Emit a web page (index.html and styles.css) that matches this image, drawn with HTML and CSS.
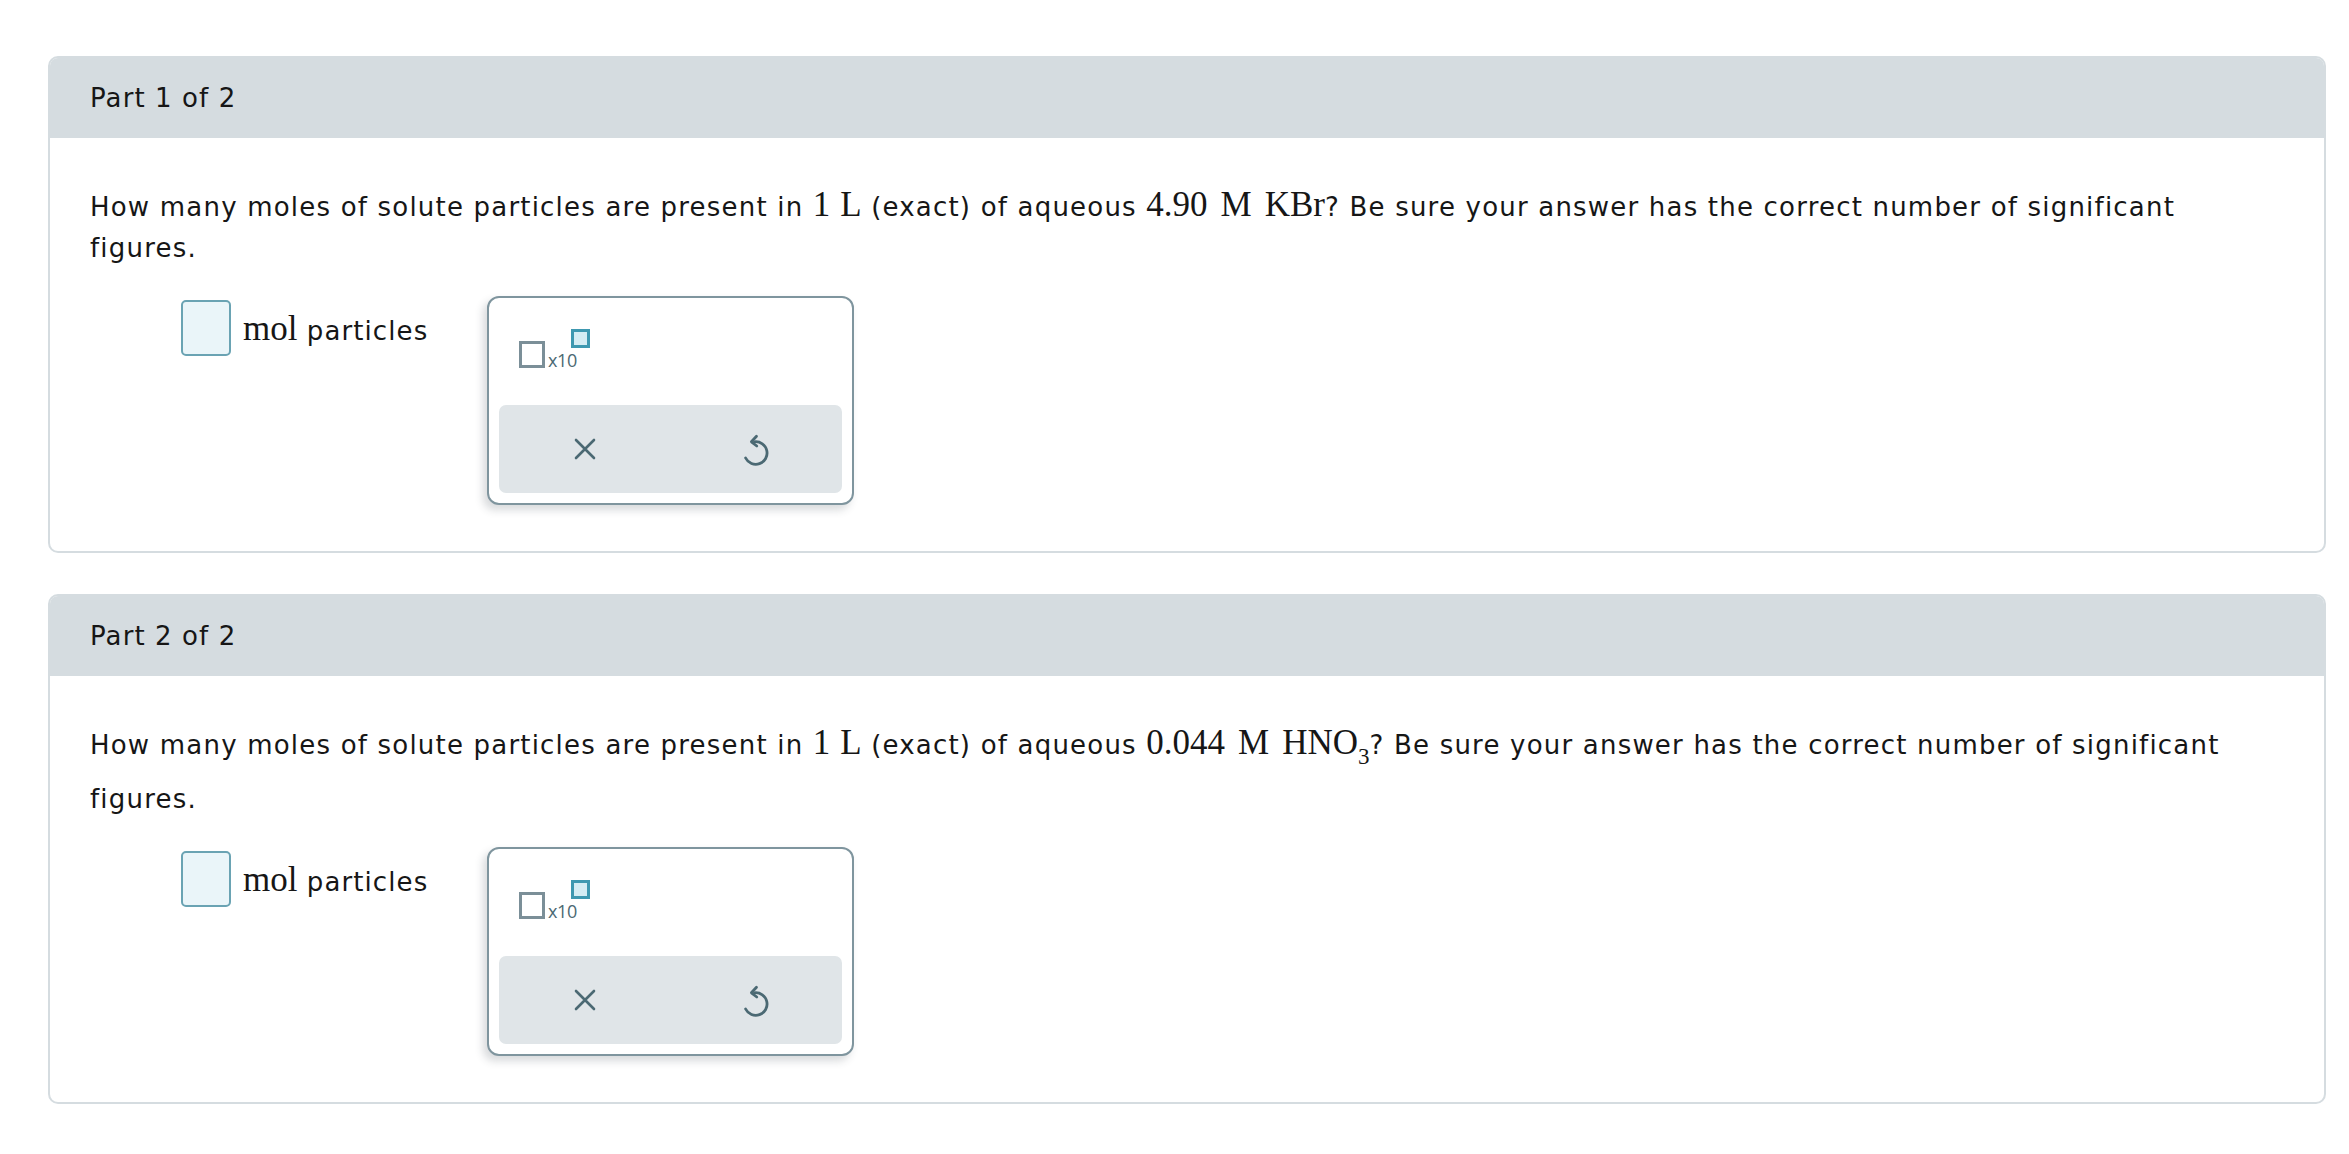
FILE: index.html
```html
<!DOCTYPE html>
<html>
<head>
<meta charset="utf-8">
<link rel="stylesheet" href="styles.css">
</head>
<body>
<main class="page">
  <section class="card">
    <header class="card-head">Part 1 of 2</header>
    <div class="card-body">
      <p class="question">How many moles of solute particles are present in <span class="m">1</span><span class="m sp">L</span> (exact) of aqueous <span class="m">4.90</span><span class="m sp2">M</span><span class="m sp2">KBr</span>? Be sure your answer has the correct number of significant figures.</p>
      <div class="answer-row">
        <div class="answer">
          <span class="ans-box"></span>
          <span class="unit"><span class="m">mol</span> particles</span>
        </div>
        <div class="popup">
          <div class="sci">
            <span class="base"></span><span class="x10">x10</span><span class="exp"></span>
          </div>
          <div class="tools">
            <button class="tool" type="button" aria-label="clear">
              <svg width="24" height="24" viewBox="0 0 24 24"><path d="M3 3 L21 21 M21 3 L3 21" stroke="#4b6973" stroke-width="2.6" fill="none" stroke-linecap="round"/></svg>
            </button>
            <button class="tool" type="button" aria-label="undo">
              <svg width="30" height="36" viewBox="0 0 30 36"><path d="M13.5 10.8 A11.3 11.3 0 1 1 4.6 27" stroke="#4b6973" stroke-width="2.8" fill="none" stroke-linecap="round"/><path d="M15.5 5.2 L10.4 10.8 L15.8 15" stroke="#4b6973" stroke-width="2.8" fill="none" stroke-linecap="round" stroke-linejoin="round"/></svg>
            </button>
          </div>
        </div>
      </div>
    </div>
  </section>

  <section class="card">
    <header class="card-head">Part 2 of 2</header>
    <div class="card-body">
      <p class="question">How many moles of solute particles are present in <span class="m">1</span><span class="m sp">L</span> (exact) of aqueous <span class="m">0.044</span><span class="m sp2">M</span><span class="m sp2">HNO<span class="sub">3</span></span>? Be sure your answer has the correct number of significant figures.</p>
      <div class="answer-row">
        <div class="answer">
          <span class="ans-box"></span>
          <span class="unit"><span class="m">mol</span> particles</span>
        </div>
        <div class="popup">
          <div class="sci">
            <span class="base"></span><span class="x10">x10</span><span class="exp"></span>
          </div>
          <div class="tools">
            <button class="tool" type="button" aria-label="clear">
              <svg width="24" height="24" viewBox="0 0 24 24"><path d="M3 3 L21 21 M21 3 L3 21" stroke="#4b6973" stroke-width="2.6" fill="none" stroke-linecap="round"/></svg>
            </button>
            <button class="tool" type="button" aria-label="undo">
              <svg width="30" height="36" viewBox="0 0 30 36"><path d="M13.5 10.8 A11.3 11.3 0 1 1 4.6 27" stroke="#4b6973" stroke-width="2.8" fill="none" stroke-linecap="round"/><path d="M15.5 5.2 L10.4 10.8 L15.8 15" stroke="#4b6973" stroke-width="2.8" fill="none" stroke-linecap="round" stroke-linejoin="round"/></svg>
            </button>
          </div>
        </div>
      </div>
    </div>
  </section>
</main>
</body>
</html>
```

FILE: styles.css
```css
html, body {
  margin: 0;
  padding: 0;
  background: #ffffff;
}

body {
  font-family: "DejaVu Sans", Verdana, sans-serif;
  color: #161616;
}

.page {
  padding: 56px 23px 40px 48px;
  display: flex;
  flex-direction: column;
  gap: 41px;
}

.card {
  border: 2px solid #d5dce0;
  border-radius: 10px;
  background: #fff;
  overflow: hidden;
}

.card-head {
  background: #d5dce0;
  height: 80px;
  display: flex;
  align-items: center;
  padding-left: 40px;
  font-size: 26px;
  letter-spacing: 1.1px;
  color: #161616;
}

.card-body {
  padding: 49px 70px 46px 40px;
}

.question {
  margin: 0;
  font-size: 26px;
  letter-spacing: 1.2px;
  line-height: 41px;
}

.m {
  font-family: "Liberation Serif", "Times New Roman", serif;
  font-size: 35px;
  letter-spacing: 0;
  line-height: 30px;
}

.m.sp {
  margin-left: 10px;
}

.m.sp2 {
  margin-left: 13px;
}

.sub {
  display: inline-block;
  font-size: 23px;
  line-height: 20px;
  vertical-align: -10px;
  padding-bottom: 12px;
}

.answer-row {
  display: flex;
  align-items: flex-start;
  margin-top: 27px;
  padding-left: 91px;
}

.answer {
  width: 306px;
  flex-shrink: 0;
  display: flex;
  align-items: flex-start;
  gap: 12px;
  padding-top: 4px;
}

.ans-box {
  width: 50px;
  height: 56px;
  box-sizing: border-box;
  border: 2px solid #6aa3b3;
  border-radius: 5px;
  background: #eaf5f9;
  flex-shrink: 0;
}

.unit {
  font-size: 26px;
  letter-spacing: 1.1px;
  line-height: 41px;
  padding-top: 11px;
  white-space: nowrap;
}

.unit .m {
  font-size: 35px;
}

.popup {
  width: 367px;
  box-sizing: border-box;
  border: 2px solid #7f959e;
  border-radius: 12px;
  background: #fff;
  box-shadow: -4px 5px 9px rgba(40, 50, 60, 0.18);
  padding: 0 10px 10px 10px;
}

.sci {
  height: 107px;
  box-sizing: border-box;
  padding: 31px 0 0 20px;
  display: flex;
  align-items: flex-start;
}

.base {
  width: 26px;
  height: 27px;
  box-sizing: border-box;
  border: 3px solid #7b8f98;
  margin-top: 12px;
}

.x10 {
  font-family: "Open Sans", "DejaVu Sans", sans-serif;
  font-size: 18px;
  color: #4b6973;
  margin-top: 22px;
  margin-left: 3px;
  line-height: 18px;
  letter-spacing: -0.4px;
}

.exp {
  width: 19px;
  height: 19px;
  box-sizing: border-box;
  border: 3px solid #3e98b0;
  background: #d4ecf3;
  margin-left: -6px;
}

.tools {
  height: 88px;
  background: #e0e5e8;
  border-radius: 7px;
  display: flex;
}

.tool {
  flex: 1;
  border: 0;
  background: transparent;
  padding: 0;
  display: flex;
  align-items: center;
  justify-content: center;
  cursor: pointer;
}
```
